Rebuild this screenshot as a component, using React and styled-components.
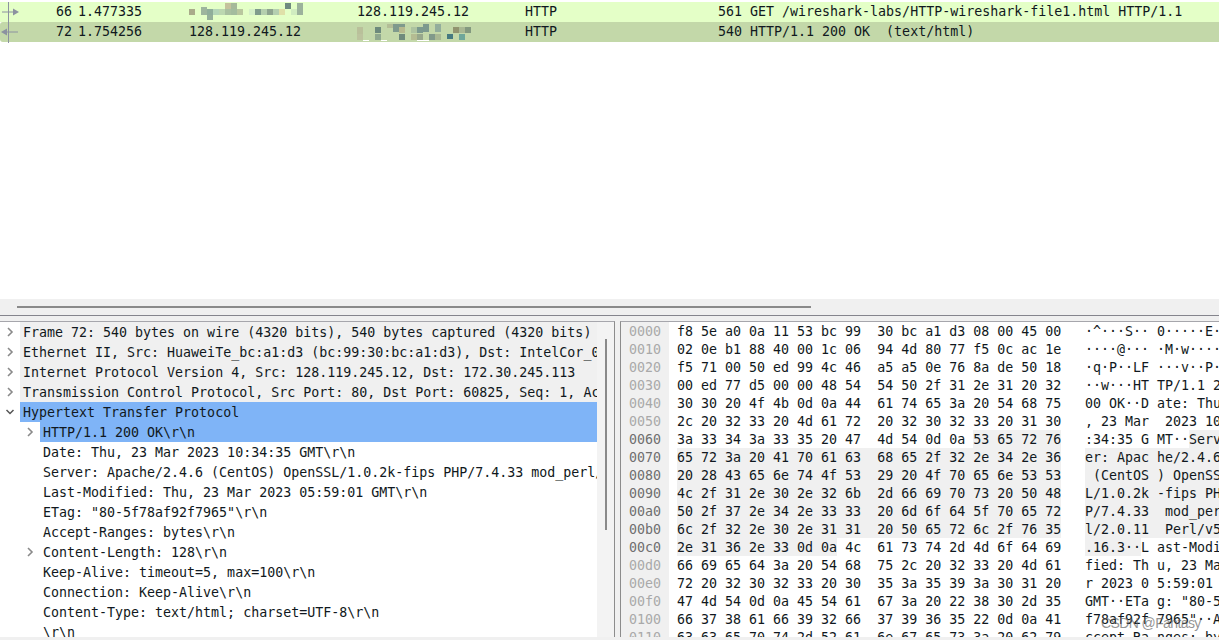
import React from 'react'
import styled, { createGlobalStyle } from 'styled-components'

const mono = `'DejaVu Sans Mono', 'Liberation Mono', monospace`

const GlobalStyle = createGlobalStyle`
  html, body {
    margin: 0;
    padding: 0;
    background: #fff;
    overflow: hidden;
  }
`

const Page = styled.div`
  position: relative;
  width: 1219px;
  height: 640px;
  display: flex;
  flex-direction: column;
  overflow: hidden;
  font-family: ${mono};
  font-size: 13.3px;
  color: #101820;
`

/* packet list */
const PacketList = styled.div`
  height: 299px;
  padding-top: 2px;
  box-sizing: border-box;
`

const PacketRow = styled.div`
  display: grid;
  grid-template-columns: 20px 52px 117px 168px 168px 193px 1fr;
  height: 20px;
  line-height: 19px;
  white-space: pre;
  background: ${p => p.$bg};
  border-radius: ${p => (p.$selected ? '3px 0 0 3px' : '0')};
`

const NumCell = styled.div`
  text-align: right;
`

const TimeCell = styled.div`
  padding-left: 6px;
`

const Cell = styled.div`
  overflow: hidden;
`

const Marker = styled.svg`
  display: block;
  overflow: visible;
`

const Mosaic = styled.svg`
  display: block;
`

/* splitter with the horizontal scrollbar of the list */
const ListScroll = styled.div`
  height: 17px;
  background: #f0f0f0;
  padding: 7px 0 0 17px;
  box-sizing: border-box;
  border-bottom: 1px solid #85858d;
  flex: none;
`

const ListThumb = styled.div`
  width: 794px;
  height: 2px;
  background: #8a8a8a;
`

const Panes = styled.div`
  flex: 1;
  min-height: 0;
  display: flex;
  padding-top: 5px;
  background: #f0f0f0;
`

/* packet details */
const TreePane = styled.div`
  width: 615px;
  flex: none;
  display: flex;
  background: #fff;
  border-top: 1px solid #a6a6ac;
  border-right: 1px solid #8c8c8c;
  box-sizing: border-box;
  margin-bottom: 3px;
  overflow: hidden;
`

const Tree = styled.div`
  width: 597px;
  flex: none;
`

const TreeRow = styled.div`
  display: flex;
  height: 20px;
  line-height: 22px;
  padding-left: ${p => p.$depth * 20}px;
`

const Twist = styled.div`
  width: 20px;
  flex: none;
  display: flex;
  align-items: center;
  padding-left: 5px;
  box-sizing: border-box;
`

const Label = styled.div`
  flex: 1;
  min-width: 0;
  padding-left: 3px;
  overflow: hidden;
  white-space: pre;
  background: ${p => (p.$tone === 'selected' ? '#7fb4f7' : p.$tone === 'related' ? '#f0f0f0' : 'transparent')};
`

const TreeScroll = styled.div`
  flex: 1;
  background: #f3f3f3;
  padding: 17px 0 0 8px;
`

const TreeThumb = styled.div`
  width: 2px;
  height: 191px;
  background: #8a8a8a;
`

const Divider = styled.div`
  width: 5px;
  flex: none;
`

/* packet bytes */
const HexPane = styled.div`
  flex: 1;
  min-width: 0;
  display: flex;
  flex-direction: column;
  background: #fff;
  border-top: 1px solid #a6a6ac;
  border-left: 1px solid #8c8c8c;
  margin-bottom: 3px;
  overflow: hidden;
`

const HexRow = styled.div`
  display: flex;
  height: 18px;
  line-height: 20px;
  white-space: pre;
  flex: none;
`

const Offset = styled.div`
  width: 48px;
  padding-left: 8px;
  box-sizing: border-box;
  flex: none;
  background: #f0f0f0;
  color: ${p => (p.$active ? '#6e6e6e' : '#a9a9a9')};
`

const HexBytes = styled.div`
  width: 384px;
  margin-left: 8px;
  flex: none;
`

const AsciiBytes = styled.div`
  margin-left: 24px;
  flex: none;
`

const Mark = styled.span`
  display: inline-block;
  height: 18px;
  background: #f0f0f0;
`

const Watermark = styled.div`
  position: absolute;
  left: 1101px;
  top: 614px;
  font-family: 'Liberation Sans', Arial, sans-serif;
  font-size: 14px;
  letter-spacing: -0.6px;
  line-height: 18px;
  white-space: nowrap;
  color: rgba(100, 100, 100, 0.7);
`

const Chevron = ({ open }) => (
  <svg width='10' height='10' viewBox='0 0 10 10' fill='none'>
    {open
      ? <path d='M1.5 3L5 6.5L8.5 3' stroke='#555' strokeWidth='1.5' />
      : <path d='M3 1L7 5L3 9' stroke='#8a8a8a' strokeWidth='1.6' />}
  </svg>
)

const sourceBlur = [
  [28, 9, 6, 6, '#a9ab8a'], [40, 7, 6, 8, '#9db59d'], [46, 9, 6, 6, '#8fae9a'], [46, 15, 6, 5, '#95b09a'],
  [52, 9, 6, 6, '#b4d6b8'], [58, 9, 6, 6, '#bcd7b0'], [64, 3, 6, 6, '#c5c29c'], [70, 3, 6, 6, '#a6b99a'],
  [64, 9, 6, 6, '#a9c0a0'], [70, 9, 6, 6, '#a3bc9e'], [76, 9, 6, 6, '#b9c79e'], [88, 9, 6, 6, '#d5f0c8'],
  [94, 9, 6, 6, '#7f9c8c'], [100, 9, 6, 6, '#b5cfae'], [106, 9, 6, 6, '#8ea48f'], [112, 9, 6, 6, '#b4cfb0'],
  [118, 9, 6, 6, '#dfe0a8'], [124, 3, 6, 6, '#6f8a80'], [130, 9, 6, 6, '#d0ecc0'], [136, 3, 6, 12, '#9cb29c']
]

const destBlur = [
  [16, 5, 6, 7, '#b9c09a'], [16, 12, 6, 6, '#bcc39e'], [34, 5, 6, 6, '#6d8a7c'], [34, 12, 6, 6, '#8fa88e'],
  [46, 2, 6, 4, '#b3bd96'], [52, 2, 12, 8, '#7f9a8c'], [58, 5, 6, 6, '#b7b98e'], [58, 12, 6, 6, '#6f8a7c'],
  [70, 5, 6, 6, '#adc3a0'], [76, 5, 6, 6, '#7c9a8e'], [82, 2, 6, 8, '#7c9a8e'], [70, 12, 6, 6, '#b4bc92'],
  [76, 12, 6, 6, '#97a88c'], [88, 12, 6, 6, '#81998a'], [94, 2, 6, 8, '#93ae9c'], [94, 12, 6, 6, '#a9b893'],
  [106, 12, 6, 5, '#467a80'], [112, 5, 6, 6, '#91946f'], [118, 5, 6, 6, '#a9b893'], [118, 12, 6, 6, '#6fa79a'],
  [124, 5, 6, 6, '#83997f'], [22, 18, 6, 1, '#ffffff'], [40, 18, 6, 1, '#ffffff'], [76, 18, 12, 1, '#ffffff']
]

const Blur = ({ tiles, x, y }) => (
  <Mosaic width='160' height='20' viewBox={`${x} ${y} 160 20`}>
    {tiles.map(([tx, ty, w, h, fill]) => (
      <rect key={`${tx}-${ty}`} x={tx} y={ty} width={w} height={h} fill={fill} />
    ))}
  </Mosaic>
)

const details = [
  { depth: 0, arrow: 'closed', tone: 'related', text: 'Frame 72: 540 bytes on wire (4320 bits), 540 bytes captured (4320 bits)' },
  { depth: 0, arrow: 'closed', tone: 'related', text: 'Ethernet II, Src: HuaweiTe_bc:a1:d3 (bc:99:30:bc:a1:d3), Dst: IntelCor_0b:11:53 (f8:5e:a0:0a:11:53)' },
  { depth: 0, arrow: 'closed', tone: 'related', text: 'Internet Protocol Version 4, Src: 128.119.245.12, Dst: 172.30.245.113' },
  { depth: 0, arrow: 'closed', tone: 'related', text: 'Transmission Control Protocol, Src Port: 80, Dst Port: 60825, Seq: 1, Ack: 486, Len: 486' },
  { depth: 0, arrow: 'open', tone: 'selected', text: 'Hypertext Transfer Protocol' },
  { depth: 1, arrow: 'closed', tone: 'selected', text: 'HTTP/1.1 200 OK\\r\\n' },
  { depth: 1, text: 'Date: Thu, 23 Mar 2023 10:34:35 GMT\\r\\n' },
  { depth: 1, text: 'Server: Apache/2.4.6 (CentOS) OpenSSL/1.0.2k-fips PHP/7.4.33 mod_perl/2.0.11 Perl/v5.16.3\\r\\n' },
  { depth: 1, text: 'Last-Modified: Thu, 23 Mar 2023 05:59:01 GMT\\r\\n' },
  { depth: 1, text: 'ETag: "80-5f78af92f7965"\\r\\n' },
  { depth: 1, text: 'Accept-Ranges: bytes\\r\\n' },
  { depth: 1, arrow: 'closed', text: 'Content-Length: 128\\r\\n' },
  { depth: 1, text: 'Keep-Alive: timeout=5, max=100\\r\\n' },
  { depth: 1, text: 'Connection: Keep-Alive\\r\\n' },
  { depth: 1, text: 'Content-Type: text/html; charset=UTF-8\\r\\n' },
  { depth: 1, text: '\\r\\n' }
]

const dump = [
  'f8 5e a0 0a 11 53 bc 99 30 bc a1 d3 08 00 45 00',
  '02 0e b1 88 40 00 1c 06 94 4d 80 77 f5 0c ac 1e',
  'f5 71 00 50 ed 99 4c 46 a5 a5 0e 76 8a de 50 18',
  '00 ed 77 d5 00 00 48 54 54 50 2f 31 2e 31 20 32',
  '30 30 20 4f 4b 0d 0a 44 61 74 65 3a 20 54 68 75',
  '2c 20 32 33 20 4d 61 72 20 32 30 32 33 20 31 30',
  '3a 33 34 3a 33 35 20 47 4d 54 0d 0a 53 65 72 76',
  '65 72 3a 20 41 70 61 63 68 65 2f 32 2e 34 2e 36',
  '20 28 43 65 6e 74 4f 53 29 20 4f 70 65 6e 53 53',
  '4c 2f 31 2e 30 2e 32 6b 2d 66 69 70 73 20 50 48',
  '50 2f 37 2e 34 2e 33 33 20 6d 6f 64 5f 70 65 72',
  '6c 2f 32 2e 30 2e 31 31 20 50 65 72 6c 2f 76 35',
  '2e 31 36 2e 33 0d 0a 4c 61 73 74 2d 4d 6f 64 69',
  '66 69 65 64 3a 20 54 68 75 2c 20 32 33 20 4d 61',
  '72 20 32 30 32 33 20 30 35 3a 35 39 3a 30 31 20',
  '47 4d 54 0d 0a 45 54 61 67 3a 20 22 38 30 2d 35',
  '66 37 38 61 66 39 32 66 37 39 36 35 22 0d 0a 41',
  '63 63 65 70 74 2d 52 61 6e 67 65 73 3a 20 62 79'
]

// bytes of the Server header, shaded as the field related to the selection
const MARK_START = 0x6c
const MARK_END = 0xc7

const toChar = b => {
  const code = parseInt(b, 16)
  return code >= 32 && code < 127 ? String.fromCharCode(code) : '\u00b7'
}

// one pane of a dump row, split in plain / marked / plain
const Segments = ({ items, base, gap, pad }) => {
  const from = Math.min(16, Math.max(0, MARK_START - base))
  const to = Math.max(from, Math.min(16, Math.max(0, MARK_END - base)))
  const join = (a, b) => {
    let out = ''
    for (let i = a; i < b; i++) {
      out += items[i]
      if (i < b - 1) out += i === 7 ? gap : pad
    }
    return out
  }
  const sep = i => (i === 8 ? gap : pad)
  if (to === from) return join(0, 16)
  return (
    <>
      {join(0, from)}{from > 0 ? sep(from) : ''}
      <Mark>{join(from, to)}</Mark>
      {to < 16 ? sep(to) : ''}{join(to, 16)}
    </>
  )
}

export default function App () {
  return (
    <Page>
      <GlobalStyle />
      <PacketList>
        <PacketRow $bg='#e4ffc7'>
          <Marker width='20' height='20'>
            <path d='M8.5 0V20M2 10H14' stroke='#8c92a0' strokeWidth='1' fill='none' />
            <path d='M13 6.5L19 10L13 13.5Z' fill='#8c92a0' />
          </Marker>
          <NumCell>66</NumCell>
          <TimeCell>1.477335</TimeCell>
          <Cell><Blur tiles={sourceBlur} x={28} y={2} /></Cell>
          <Cell>128.119.245.12</Cell>
          <Cell>HTTP</Cell>
          <Cell>561 GET /wireshark-labs/HTTP-wireshark-file1.html HTTP/1.1</Cell>
        </PacketRow>
        <PacketRow $bg='#c3d8a9' $selected>
          <Marker width='20' height='20'>
            <path d='M8.5 0V21M6 10H18' stroke='#8c92a0' strokeWidth='1' fill='none' />
            <path d='M7 6.5L1 10L7 13.5Z' fill='#8c92a0' />
          </Marker>
          <NumCell>72</NumCell>
          <TimeCell>1.754256</TimeCell>
          <Cell>128.119.245.12</Cell>
          <Cell><Blur tiles={destBlur} x={16} y={0} /></Cell>
          <Cell>HTTP</Cell>
          <Cell>540 HTTP/1.1 200 OK  (text/html)</Cell>
        </PacketRow>
      </PacketList>

      <ListScroll><ListThumb /></ListScroll>

      <Panes>
        <TreePane>
          <Tree>
            {details.map(row => (
              <TreeRow key={row.text} $depth={row.depth}>
                <Twist>{row.arrow && <Chevron open={row.arrow === 'open'} />}</Twist>
                <Label $tone={row.tone}>{row.text}</Label>
              </TreeRow>
            ))}
          </Tree>
          <TreeScroll><TreeThumb /></TreeScroll>
        </TreePane>
        <Divider />
        <HexPane>
          {dump.map((line, i) => {
            const bytes = line.split(' ')
            const base = i * 16
            const active = base + 16 > MARK_START && base < MARK_END
            return (
              <HexRow key={base}>
                <Offset $active={active}>{base.toString(16).padStart(4, '0')}</Offset>
                <HexBytes><Segments items={bytes} base={base} gap='  ' pad=' ' /></HexBytes>
                <AsciiBytes><Segments items={bytes.map(toChar)} base={base} gap=' ' pad='' /></AsciiBytes>
              </HexRow>
            )
          })}
        </HexPane>
      </Panes>

      <Watermark>CSDN @Fantasy</Watermark>
    </Page>
  )
}
